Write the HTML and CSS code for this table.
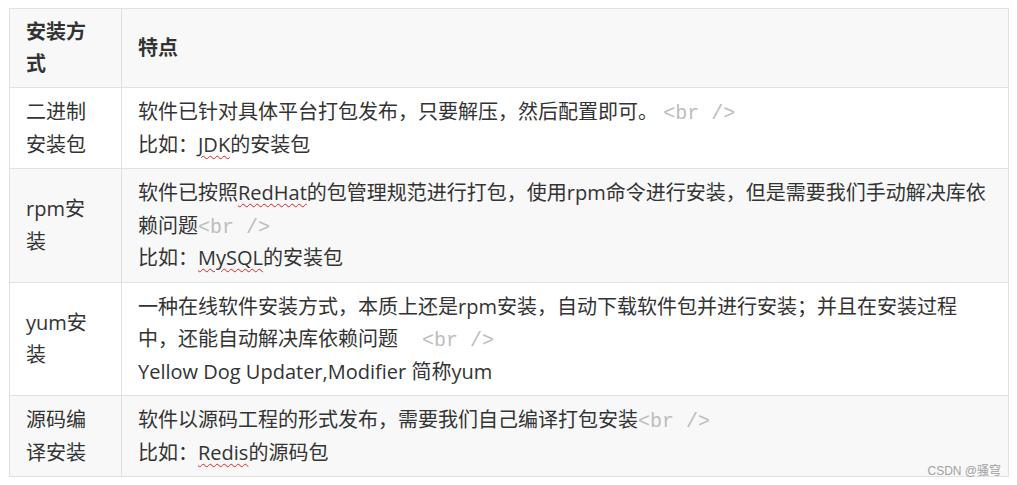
FILE: index.html
```html
<!DOCTYPE html>
<html lang="zh-CN">
<head>
    <meta charset="UTF-8">
    <meta name="viewport" content="width=device-width, initial-scale=1.0">
    <title>安装方式</title>
    <link rel="stylesheet" href="styles.css">
</head>
<body>
    <div class="article">
        <table class="install-table">
            <colgroup>
                <col class="col-type">
                <col class="col-desc">
            </colgroup>
            <thead>
                <tr>
                    <th>安装方式</th>
                    <th>特点</th>
                </tr>
            </thead>
            <tbody>
                <tr>
                    <td>二进制安装包</td>
                    <td>软件已针对具体平台打包发布，只要解压，然后配置即可。 <span class="tag">&lt;br /&gt;</span><br>比如：<span class="typo">JDK</span>的安装包</td>
                </tr>
                <tr>
                    <td>rpm安装</td>
                    <td>软件已按照<span class="typo">RedHat</span>的包管理规范进行打包，使用rpm命令进行安装，但是需要我们手动解决库依赖问题<span class="tag">&lt;br /&gt;</span><br>比如：<span class="typo">MySQL</span>的安装包</td>
                </tr>
                <tr>
                    <td>yum安装</td>
                    <td>一种在线软件安装方式，本质上还是rpm安装，自动下载软件包并进行安装；并且在安装过程中，还能自动解决库依赖问题<span class="tag">  &lt;br /&gt;</span><br>Yellow Dog Updater,Modifier 简称yum</td>
                </tr>
                <tr>
                    <td>源码编译安装</td>
                    <td>软件以源码工程的形式发布，需要我们自己编译打包安装<span class="tag">&lt;br /&gt;</span><br>比如：<span class="typo">Redis</span>的源码包</td>
                </tr>
            </tbody>
        </table>
        <div class="watermark">CSDN @骚穹</div>
    </div>
</body>
</html>
```

FILE: styles.css
```css
body {
    margin: 0;
    padding: 0;
    background: #fff;
    font-family: "Open Sans", "Noto Sans CJK SC", sans-serif;
    color: #333;
}

.article {
    position: relative;
    padding: 8px 9px;
}

.install-table {
    width: 1000px;
    table-layout: fixed;
    border-collapse: collapse;
    font-size: 20px;
    line-height: 32.5px;
}

.col-type {
    width: 112px;
}

.install-table th,
.install-table td {
    border: 1px solid #e1e1e1;
    padding: 8px 16px 7px;
    text-align: left;
    vertical-align: middle;
}

.install-table th:first-child,
.install-table td:first-child {
    padding-right: 26px;
}

.install-table th {
    font-weight: bold;
    background: #f8f8f8;
    padding-top: 7px;
    line-height: 32px;
}

.install-table tbody tr:nth-child(even) {
    background: #f8f8f8;
}

.tag {
    font-family: "Liberation Mono", monospace;
    color: #bdbdbd;
    white-space: pre;
    line-height: 1;
}

.typo {
    text-decoration: underline wavy #e02020;
    text-decoration-thickness: 1px;
    text-underline-offset: 3px;
}

.watermark {
    position: absolute;
    right: 16px;
    top: 461px;
    font-family: "Liberation Sans", "Noto Sans CJK SC", sans-serif;
    font-size: 12px;
    color: #a0a0a0;
}
```
